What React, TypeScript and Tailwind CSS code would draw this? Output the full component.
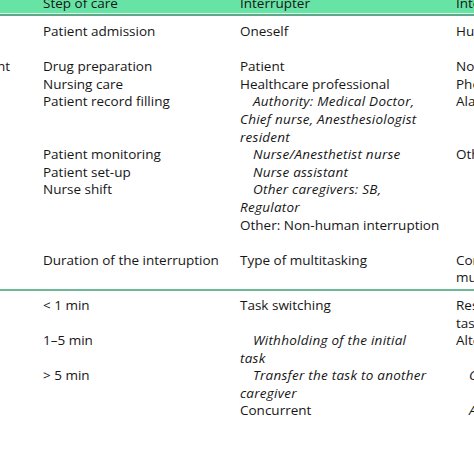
import type { ReactNode } from "react";

const FONT = { fontFamily: '"Open Sans", "Noto Sans", sans-serif' };

function Row({
  c1,
  c2,
  c3,
  c4,
  last,
}: {
  c1?: ReactNode;
  c2: ReactNode;
  c3: ReactNode;
  c4: ReactNode;
  last?: boolean;
}) {
  return (
    <div className={`flex ${last ? "" : "pb-[17.6px]"}`}>
      <div className="w-[163px] shrink-0 pr-[33px] text-right">{c1}</div>
      <div className="w-[197px] shrink-0">{c2}</div>
      <div className="w-[216px] shrink-0">{c3}</div>
      <div className="w-[220px] shrink-0">{c4}</div>
    </div>
  );
}

const Sub = ({ children }: { children: ReactNode }) => (
  <div className="italic indent-[13px] tracking-[0.25px]">{children}</div>
);

export default function App() {
  return (
    <div
      className="w-[474px] h-[474px] overflow-hidden bg-white text-[#161616] text-[13.5px] leading-[17.6px] whitespace-nowrap"
      style={FONT}
    >
      <div className="-ml-[120px]">
        {/* Header */}
        <div className="bg-[#67e3a5] h-[13px] flex items-end">
          <div className="flex leading-[17.6px]">
            <div className="w-[163px] shrink-0" />
            <div className="w-[197px] shrink-0">Step of care</div>
            <div className="w-[216px] shrink-0">Interrupter</div>
            <div className="w-[220px] shrink-0">Interruption source</div>
          </div>
        </div>
        <div className="h-px bg-[#d4f5e4]" />
        <div className="h-[2px] bg-[#5ca888]" />

        {/* Context */}
        <div className="pt-[7px] pb-[1px]">
          <Row c2={<div>Patient admission</div>} c3={<div>Oneself</div>} c4={<div>Human</div>} />
          <Row
            c1={<div>Interruption event</div>}
            c2={
              <>
                <div>Drug preparation</div>
                <div>Nursing care</div>
                <div>Patient record filling</div>
                <div>&nbsp;</div>
                <div>&nbsp;</div>
                <div>Patient monitoring</div>
                <div>Patient set-up</div>
                <div>Nurse shift</div>
              </>
            }
            c3={
              <>
                <div>Patient</div>
                <div>Healthcare professional</div>
                <Sub>
                  Authority: Medical Doctor,
                  <br />
                  Chief nurse, Anesthesiologist
                  <br />
                  resident
                </Sub>
                <Sub>Nurse/Anesthetist nurse</Sub>
                <Sub>Nurse assistant</Sub>
                <Sub>
                  Other caregivers: SB,
                  <br />
                  Regulator
                </Sub>
                <div>Other: Non-human interruption</div>
              </>
            }
            c4={
              <>
                <div>Notification</div>
                <div>Phone call</div>
                <div>Alarm</div>
                <div>&nbsp;</div>
                <div>&nbsp;</div>
                <div>Other</div>
              </>
            }
          />
          <Row
            last
            c2={<div>Duration of the interruption</div>}
            c3={<div>Type of multitasking</div>}
            c4={
              <>
                <div>Consequences of</div>
                <div>multitasking</div>
              </>
            }
          />
        </div>

        <div className="h-[2px] bg-[#6db897] mt-[1px]" />

        {/* Outcomes */}
        <div className="pt-[6px]">
          <Row
            last
            c2={
              <>
                <div>&lt; 1 min</div>
                <div>&nbsp;</div>
                <div>1–5 min</div>
                <div>&nbsp;</div>
                <div>&gt; 5 min</div>
              </>
            }
            c3={
              <>
                <div>Task switching</div>
                <div>&nbsp;</div>
                <Sub>
                  Withholding of the initial
                  <br />
                  task
                </Sub>
                <Sub>
                  Transfer the task to another
                  <br />
                  caregiver
                </Sub>
                <div>Concurrent</div>
              </>
            }
            c4={
              <>
                <div>Resumption of the initial</div>
                <div>task</div>
                <div>Alteration</div>
                <div>&nbsp;</div>
                <Sub>Care delay</Sub>
                <div>&nbsp;</div>
                <Sub>Adverse event</Sub>
              </>
            }
          />
        </div>
      </div>
    </div>
  );
}
